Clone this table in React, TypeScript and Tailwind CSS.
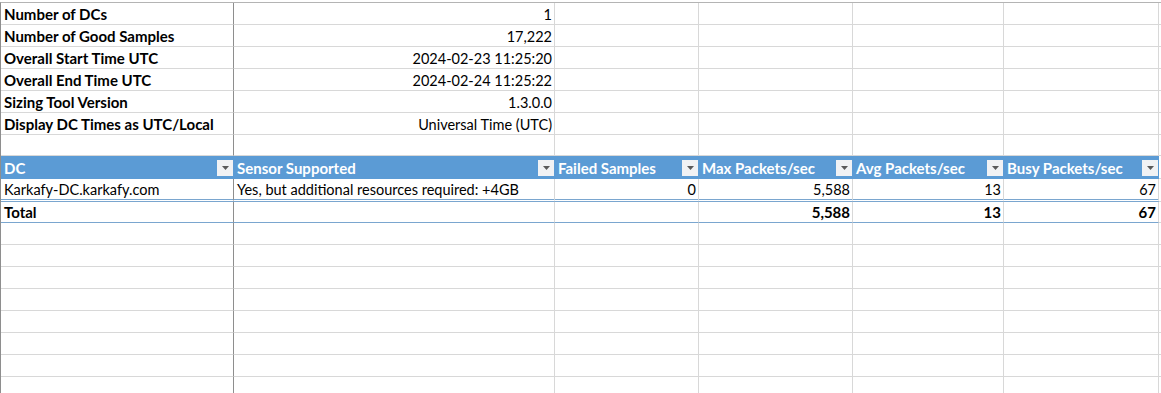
import React from 'react';

type Cell = { text?: string; bold?: boolean; right?: boolean };

const cols = 'grid-cols-[233px_321px_144px_154px_151px_155px_1fr]';

const summary: [string, string][] = [
  ['Number of DCs', '1'],
  ['Number of Good Samples', '17,222'],
  ['Overall Start Time UTC', '2024-02-23 11:25:20'],
  ['Overall End Time UTC', '2024-02-24 11:25:22'],
  ['Sizing Tool Version', '1.3.0.0'],
  ['Display DC Times as UTC/Local', 'Universal Time (UTC)'],
];

const headers = ['DC', 'Sensor Supported', 'Failed Samples', 'Max Packets/sec', 'Avg Packets/sec', 'Busy Packets/sec'];

const dataRow: Cell[] = [
  { text: 'Karkafy-DC.karkafy.com' },
  { text: 'Yes, but additional resources required: +4GB' },
  { text: '0', right: true },
  { text: '5,588', right: true },
  { text: '13', right: true },
  { text: '67', right: true },
];

const totalRow: Cell[] = [
  { text: 'Total', bold: true },
  {},
  {},
  { text: '5,588', bold: true, right: true },
  { text: '13', bold: true, right: true },
  { text: '67', bold: true, right: true },
];

function gridBorder(i: number) {
  return i === 0 ? 'border-r-[#8e8e8e]' : 'border-r-[#d8d8d8]';
}

function GridRow({ cells, h = 'h-[22px]' }: { cells: Cell[]; h?: string }) {
  return (
    <div className={`grid ${cols}`}>
      {[...cells, ...Array(7 - cells.length).fill({})].map((c: Cell, i) => (
        <div
          key={i}
          className={`${h} flex items-end pb-[2px] border-b border-r border-b-[#d8d8d8] ${gridBorder(i)} ${
            c.right ? 'justify-end pr-[2px]' : 'pl-[3px]'
          } ${c.bold ? 'font-bold text-[15px]' : ''} whitespace-nowrap overflow-hidden`}
        >
          {c.text}
        </div>
      ))}
    </div>
  );
}

function FilterButton() {
  return (
    <span className="w-4 h-4 shrink-0 bg-[#f1f2f4] flex items-center justify-center">
      <svg width="7" height="4" viewBox="0 0 7 4">
        <path d="M0 0 L7 0 L3.5 4 Z" fill="#5a5a5a" />
      </svg>
    </span>
  );
}

export default function App() {
  return (
    <div
      className="w-[1161px] h-[393px] overflow-hidden bg-white text-black text-[14.5px] leading-none"
      style={{ fontFamily: 'Lato, "Open Sans", sans-serif' }}
    >
      <div className="h-[2px]" />
      <div className="border-t border-l border-t-[#b4b4b4] border-l-[#8e8e8e]">
        {summary.map(([label, value]) => (
          <GridRow key={label} cells={[{ text: label, bold: true }, { text: value, right: true }]} />
        ))}
        <GridRow cells={[]} h="h-[21px]" />

        {/* table header */}
        <div className={`grid ${cols}`}>
          {headers.map(t => (
            <div
              key={t}
              className="h-[23px] bg-[#5b9bd5] text-white font-bold text-[15px] flex items-center justify-between pl-[3px] pr-[1px]"
            >
              <span className="pt-[2px]">{t}</span>
              <FilterButton />
            </div>
          ))}
          <div className="h-[23px] border-b border-b-[#d8d8d8]" />
        </div>

        {/* data row with double rule under it */}
        <div className={`grid ${cols}`}>
          {[...dataRow, {} as Cell].map((c, i) => (
            <div
              key={i}
              className={`h-[23px] flex items-end pb-[2px] border-r ${gridBorder(i)} ${
                i < 6 ? 'border-b-[3px] border-double border-b-[#7aa6cf]' : 'border-b border-b-[#d8d8d8]'
              } ${c.right ? 'justify-end pr-[2px]' : 'pl-[3px]'} whitespace-nowrap overflow-hidden`}
              style={{ borderRightStyle: 'solid' }}
            >
              {c.text}
            </div>
          ))}
        </div>

        {/* total row */}
        <div className={`grid ${cols}`}>
          {[...totalRow, {} as Cell].map((c, i) => (
            <div
              key={i}
              className={`h-[21px] flex items-end pb-[2px] border-r border-b ${gridBorder(i)} ${
                i < 6 ? 'border-b-[#7aa6cf]' : 'border-b-[#d8d8d8]'
              } ${c.right ? 'justify-end pr-[2px]' : 'pl-[3px]'} ${c.bold ? 'font-bold text-[15px]' : ''} whitespace-nowrap`}
            >
              {c.text}
            </div>
          ))}
        </div>

        {Array.from({ length: 8 }).map((_, r) => (
          <GridRow key={r} cells={[]} />
        ))}
      </div>
    </div>
  );
}
